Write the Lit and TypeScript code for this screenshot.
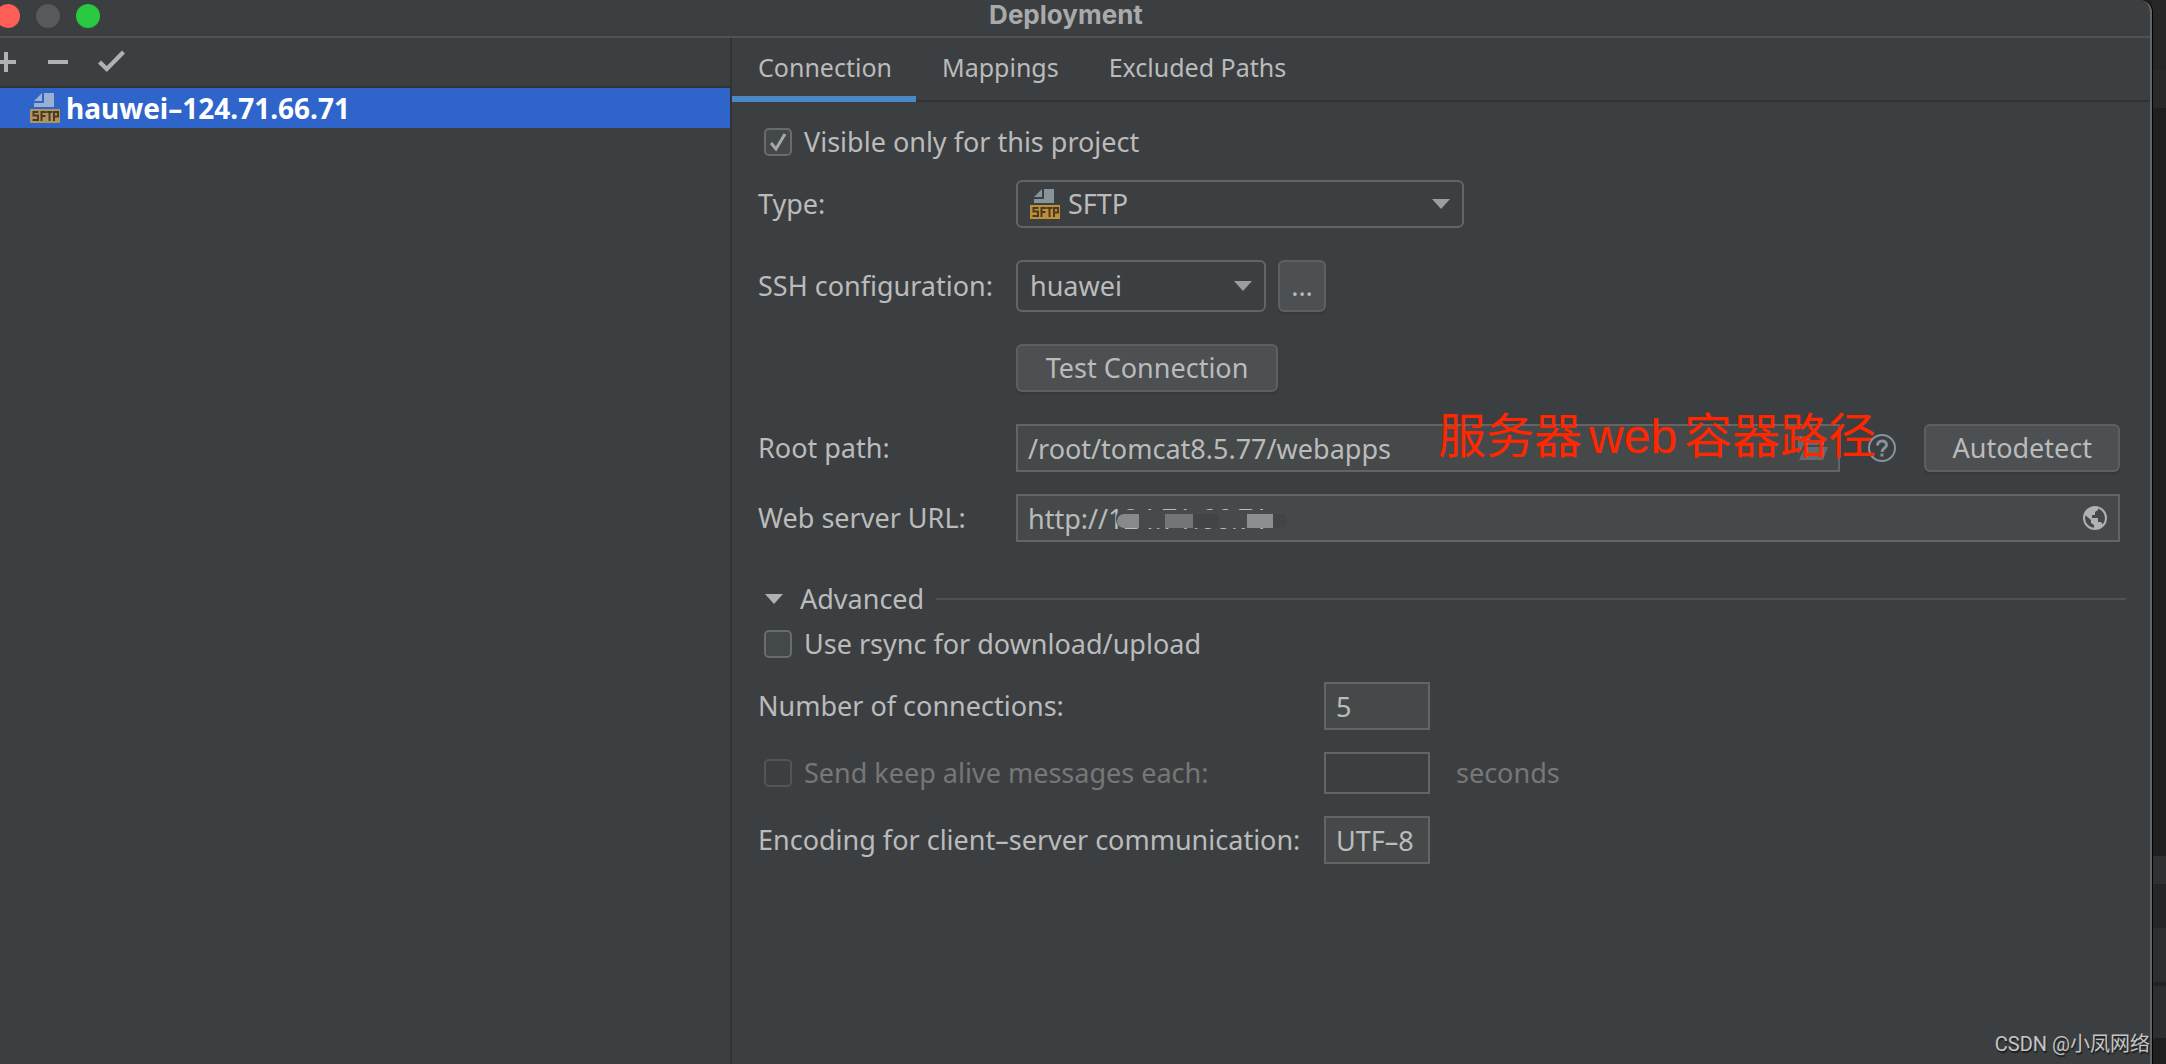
import { LitElement, html, css } from "lit";
import { customElement, state } from "lit/decorators.js";

const sftpIcon = html`
  <svg class="sftp" viewBox="0 0 30 30" width="30" height="30" aria-hidden="true">
    <path class="page" d="M4 8 L12 0 V8 Z M14 0 H24 V14 H4 V10 H14 Z" />
    <rect class="badge" x="0" y="16" width="30" height="14" />
    <g class="badge-ink">
      <path d="M8.5 19 H3.5 V22.500 H8 V27 H2.500" />
      <path d="M11.500 28 V19 H16 M11.500 23 H15.500" />
      <path d="M16.500 19 H22.500 M19.500 19 V28" />
      <path d="M24 28 V19 H28 V23.500 H24" />
    </g>
  </svg>
`;

const arrow = html`
  <svg class="arrow" viewBox="0 0 18 10" width="18" height="10" aria-hidden="true">
    <path d="M0 0 H18 L9 10 Z" />
  </svg>
`;

@customElement("app-root")
export class AppRoot extends LitElement {
  static styles = css`
    :host {
      display: block;
      font-family: "Lucida Grande", "Noto Sans", "Noto Sans CJK SC", sans-serif;
      font-size: 27px;
      line-height: 32px;
      color: #bbbbbb;
      background: #3c3f41;
    }
    * {
      box-sizing: border-box;
    }
    button,
    input,
    select {
      font: inherit;
      color: inherit;
      margin: 0;
    }
    .screen {
      display: flex;
      min-height: 100vh;
      background: #212121;
      overflow: hidden;
    }
    .window {
      flex: 1;
      min-width: 0;
      display: flex;
      flex-direction: column;
      position: relative;
      background: #3c3f41;
      border-right: 2px solid #636566;
      border-top-right-radius: 12px;
      box-shadow: 1px 0 0 #000000;
    }
    .behind {
      flex: 0 0 14px;
      display: flex;
      flex-direction: column;
    }
    .behind .a { flex: 70; background: #262626; }
    .behind .b { flex: 38; background: #292929; }
    .behind .c { flex: 748; background: #1f1f1f; }
    .behind .d { flex: 28; background: #2e3032; }
    .behind .e { flex: 44; background: #242527; }
    .behind .f { flex: 54; background: #2c2d2e; }
    .behind .g { flex: 4; background: #222222; }
    .behind .h { flex: 52; background: #2c2e2f; }
    .behind .i { flex: 26; background: #1f1f1f; }

    .titlebar {
      display: grid;
      grid-template-columns: 100px 1fr 118px;
      height: 38px;
      border-bottom: 2px solid #505152;
      padding-bottom: 4px;
      align-items: center;
    }
    .lights {
      display: flex;
      gap: 16px;
      margin-left: -4px;
    }
    .light {
      width: 24px;
      height: 24px;
      padding: 0;
      border: 0;
      border-radius: 50%;
    }
    .close { background: #ff5f57; }
    .minimise { background: #59595b; }
    .zoom { background: #28c840; }
    h1 {
      margin: 0;
      font-family: Inter, "Liberation Sans", sans-serif;
      font-size: 26px;
      line-height: 30px;
      padding-bottom: 2px;
      font-weight: 700;
      text-align: center;
      color: #a9aaab;
    }

    .body {
      flex: 1;
      display: flex;
    }
    .sidebar {
      flex: 0 0 calc(34% + 1px);
      border-right: 2px solid #323232;
    }
    .toolbar {
      display: flex;
      align-items: center;
      height: 50px;
      border-bottom: 2px solid #323232;
    }
    .tool {
      padding: 0;
      border: 0;
      background: none;
      display: flex;
      width: 52px;
    }
    .tool.first {
      width: 50px;
      margin-left: -4px;
    }
    .tool svg {
      fill: #afb1b3;
    }
    .servers {
      list-style: none;
      margin: 0;
      padding: 0;
    }
    .server {
      display: flex;
      align-items: center;
      gap: 6px;
      height: 40px;
      padding-left: 30px;
      background: #2f65ca;
      color: #ffffff;
      font-size: 28px;
      font-weight: 700;
    }
    .page { fill: #87939a; }
    .badge { fill: #be8f3b; }
    .server .page { fill: #9ab0cf; }
    .server .badge { fill: #b1935f; }
    .badge-ink {
      fill: none;
      stroke: #4a3a22;
      stroke-width: 2;
    }

    .content {
      flex: 1;
      min-width: 0;
    }
    .tabs {
      display: flex;
      height: 64px;
      border-bottom: 2px solid #323232;
    }
    .tab {
      height: 64px;
      padding: 0 24px 0 26px;
      border: 0;
      background: none;
      border-bottom: 6px solid transparent;
      font-size: 25px;
    }
    .tab.active {
      border-bottom-color: #4a88c7;
    }

    .form {
      padding: 26px 30px 32px 26px;
    }
    .row {
      display: grid;
      grid-template-columns: 258px minmax(0, 1fr);
      align-items: center;
    }
    .wide {
      display: grid;
      grid-template-columns: 566px 106px 1fr;
      align-items: center;
      margin-top: 22px;
    }
    .gap-m { margin-top: 24px; }
    .gap-l { margin-top: 32px; }
    .gap-s { margin-top: 22px; }
    .cells {
      display: flex;
    }
    .check {
      display: flex;
      align-items: center;
      gap: 12px;
      height: 28px;
      padding-left: 6px;
    }
    .box {
      appearance: none;
      display: grid;
      place-items: center;
      width: 28px;
      height: 28px;
      border: 2px solid #6b6b6b;
      border-radius: 5px;
      background: #43494a;
    }
    .stack {
      display: grid;
      align-items: center;
    }
    .stack > * {
      grid-area: 1 / 1;
    }
    .stack > svg {
      pointer-events: none;
    }
    .tick {
      justify-self: center;
      fill: none;
      stroke: #a7a7a7;
      stroke-width: 3;
    }
    .disabled {
      color: #777777;
    }
    .disabled .box {
      border-color: #545556;
      background: transparent;
    }
    select {
      appearance: none;
      width: 100%;
      height: 48px;
      padding: 0 40px 0 12px;
      border: 2px solid #646464;
      border-radius: 6px;
      background: transparent;
    }
    .type {
      width: 448px;
    }
    .type select {
      padding-left: 50px;
    }
    .type .sftp {
      margin-left: 14px;
    }
    .ssh {
      width: 250px;
      margin-right: 12px;
    }
    .ssh select {
      height: 52px;
    }
    .arrow {
      fill: #9b9da0;
      justify-self: end;
      margin-right: 14px;
    }
    .button {
      height: 48px;
      padding: 0 26px;
      border: 2px solid #5e6060;
      border-radius: 6px;
      background: #4c5052;
      box-shadow: 0 3px 0 #37393a;
      line-height: 32px;
    }
    .test {
      min-width: 262px;
    }
    .more {
      width: 48px;
      height: 52px;
      padding: 0;
    }
    .field {
      width: 100%;
      height: 48px;
      padding: 0 10px;
      border: 2px solid #646464;
      border-radius: 0;
      background: #45494a;
    }
    .field:disabled {
      height: 42px;
      background: transparent;
    }
    .root-field {
      flex: 1;
      position: relative;
    }
    .folder {
      justify-self: end;
      margin-right: 12px;
      fill: #616a6e;
    }
    .help {
      display: flex;
      align-items: center;
      padding: 0;
      border: 0;
      background: none;
      margin: 0 28px;
    }
    .note {
      position: absolute;
      left: 422px;
      top: -17px;
      white-space: nowrap;
      font-family: "Liberation Sans", "Noto Sans CJK SC", sans-serif;
      font-size: 48px;
      line-height: 60px;
      color: #ff2600;
      pointer-events: none;
    }
    .note span {
      padding: 0 7px;
    }
    .url {
      position: relative;
    }
    .globe {
      justify-self: end;
      margin-right: 13px;
    }
    .mosaic {
      position: absolute;
      left: 100px;
      top: 16px;
    }

    .advanced {
      display: flex;
      align-items: center;
      height: 30px;
      margin: 42px -6px 16px 0;
    }
    .toggle {
      display: flex;
      align-items: center;
      gap: 17px;
      padding: 0 12px 0 7px;
      border: 0;
      background: none;
      line-height: 30px;
    }
    .toggle .arrow {
      margin: 0;
      fill: #afb1b3;
    }
    .rule {
      flex: 1;
      height: 2px;
      background: #515151;
    }
    .unit {
      padding-left: 26px;
      color: #777777;
    }
    .watermark {
      position: absolute;
      right: 0;
      bottom: 4px;
      font-family: Roboto, "Noto Sans CJK SC", sans-serif;
      font-size: 20px;
      line-height: 32px;
      color: #c4c5c5;
      text-shadow: 1px 2px 1px #1c1d1e;
    }
  `;

  @state() private open = true;

  render() {
    return html`
      <div class="screen">
        <main class="window">
          <header class="titlebar">
            <div class="lights">
              <button class="light close" aria-label="Close"></button>
              <button class="light minimise" aria-label="Minimise"></button>
              <button class="light zoom" aria-label="Zoom"></button>
            </div>
            <h1>Deployment</h1>
          </header>
          <div class="body">
            <aside class="sidebar">
              <div class="toolbar">
                <button class="tool first" aria-label="Add">
                  <svg viewBox="0 0 20 20" width="20" height="20">
                    <path d="M0 8 H8 V0 H12 V8 H20 V12 H12 V20 H8 V12 H0 Z" />
                  </svg>
                </button>
                <button class="tool" aria-label="Remove">
                  <svg viewBox="0 0 24 20" width="24" height="20"><path d="M2 8 H22 V12 H2 Z" /></svg>
                </button>
                <button class="tool" aria-label="Use as default">
                  <svg viewBox="0 0 28 24" width="28" height="24">
                    <path d="M0 13.500 L3 10.500 L8.800 16 L24 0.500 L27 3.500 L8.800 22 Z" />
                  </svg>
                </button>
              </div>
              <ul class="servers">
                <li class="server">${sftpIcon}<span>hauwei–124.71.66.71</span></li>
              </ul>
            </aside>
            <section class="content">
              <nav class="tabs" role="tablist">
                <button class="tab active" role="tab" aria-selected="true">Connection</button>
                <button class="tab" role="tab" aria-selected="false">Mappings</button>
                <button class="tab" role="tab" aria-selected="false">Excluded Paths</button>
              </nav>
              <div class="form">
                <label class="check">
                  <span class="stack">
                    <input class="box" type="checkbox" checked />
                    <svg class="tick" viewBox="0 0 20 22" width="20" height="22">
                      <path d="M3 12 L8 18 L17 3" />
                    </svg>
                  </span>
                  Visible only for this project
                </label>
                <div class="row gap-m">
                  <label for="type">Type:</label>
                  <div class="stack type">
                    <select id="type"><option>SFTP</option></select>
                    ${sftpIcon}${arrow}
                  </div>
                </div>
                <div class="row gap-l">
                  <label for="ssh">SSH configuration:</label>
                  <div class="cells">
                    <div class="stack ssh">
                      <select id="ssh"><option>huawei</option></select>
                      ${arrow}
                    </div>
                    <button class="button more">...</button>
                  </div>
                </div>
                <div class="row gap-l">
                  <span></span>
                  <div class="cells"><button class="button test">Test Connection</button></div>
                </div>
                <div class="row gap-l">
                  <label for="root">Root path:</label>
                  <div class="cells">
                    <div class="stack root-field">
                      <input class="field" id="root" type="text" value="/root/tomcat8.5.77/webapps" />
                      <svg class="folder" viewBox="0 0 30 24" width="30" height="24">
                        <path d="M0 0 H10 L13 4 H26 V9 H6 L0 18 Z M7 11 H30 L25 24 H1 Z" />
                      </svg>
                      <div class="note">服务器<span>web</span>容器路径</div>
                    </div>
                    <button class="help" aria-label="Help">
                      <svg viewBox="0 0 28 28" width="28" height="28" fill="none" stroke="#87939a" stroke-width="2">
                        <circle cx="14" cy="14" r="13" />
                        <path stroke-width="3" d="M9.500 11.500 C9.500 5.500 18.500 5.500 18.500 11 C18.500 14 14 14 14 18" />
                        <path stroke-width="3" d="M14 19.500 V22.500" />
                      </svg>
                    </button>
                    <button class="button">Autodetect</button>
                  </div>
                </div>
                <div class="row gap-s">
                  <label for="url">Web server URL:</label>
                  <div class="stack url">
                    <input class="field" id="url" type="text" value="http://124.71.66.71" />
                    <svg class="mosaic" viewBox="0 0 172 18" width="172" height="18" aria-hidden="true">
                      <rect width="172" height="18" rx="8" fill="#464a4a" />
                      <path d="M23 4 H8 A7 7 0 0 0 8 18 H23 Z" fill="#868a8b" />
                      <rect x="49" y="4" width="28" height="14" fill="#727677" />
                      <rect x="77" y="4" width="26" height="14" fill="#424546" />
                      <rect x="131" y="4" width="26" height="14" fill="#8b8f90" />
                      <path d="M157 4 H168 A8 8 0 0 1 164 18 H157 Z" fill="#424546" />
                    </svg>
                    <svg class="globe" viewBox="0 0 24 24" width="24" height="24">
                      <circle cx="12" cy="12" r="11" fill="none" stroke="#afb1b3" stroke-width="2" />
                      <path fill="#afb1b3" d="M3 6 L8 1 H15 V4 L12 6 V9 H9 V12 H15 V16 H18 L20 19 L14 23 H11 V19 L8 17 V14 L2 9 Z" />
                    </svg>
                  </div>
                </div>
                <div class="advanced">
                  <button class="toggle" aria-expanded=${this.open} @click=${() => (this.open = !this.open)}>
                    ${arrow}Advanced
                  </button>
                  <span class="rule"></span>
                </div>
                ${this.open ? this.renderAdvanced() : null}
              </div>
            </section>
          </div>
          <div class="watermark">CSDN @小凤网络</div>
        </main>
        <div class="behind" aria-hidden="true">
          ${["a", "b", "c", "d", "e", "f", "g", "h", "i"].map((part) => html`<span class=${part}></span>`)}
        </div>
      </div>
    `;
  }

  private renderAdvanced() {
    return html`
      <label class="check"><input class="box" type="checkbox" />Use rsync for download/upload</label>
      <div class="wide gap-m">
        <label for="count">Number of connections:</label>
        <input class="field" id="count" type="text" value="5" />
      </div>
      <div class="wide">
        <label class="check disabled"><input class="box" type="checkbox" disabled />Send keep alive messages each:</label>
        <input class="field" type="text" aria-label="Keep alive interval in seconds" disabled />
        <span class="unit">seconds</span>
      </div>
      <div class="wide">
        <label for="encoding">Encoding for client–server communication:</label>
        <input class="field" id="encoding" type="text" value="UTF–8" />
      </div>
    `;
  }
}
